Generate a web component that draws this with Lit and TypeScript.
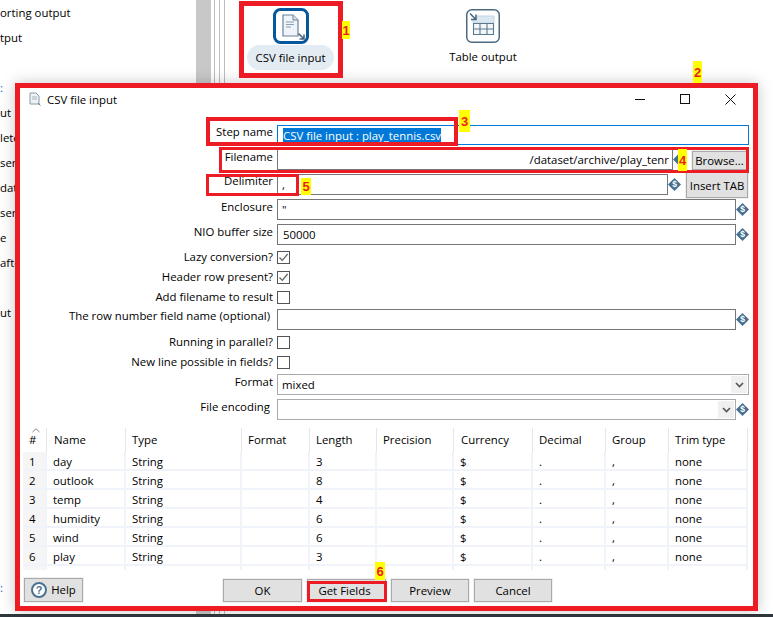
import { LitElement, html, css } from "lit";
import { customElement } from "lit/decorators.js";

const dollar = html`<svg class="var" width="13" height="13" viewBox="0 0 13 13"><path d="M6.5 0 13 6.5 6.5 13 0 6.5Z" fill="#46708f"/><circle cx="6.5" cy="6.5" r="4" fill="#46708f"/><text x="6.5" y="9.4" text-anchor="middle" font-size="8.5" font-weight="700" font-family="Liberation Sans, sans-serif" fill="#fff">$</text></svg>`;
const diamond = html`<svg class="var" width="13" height="13" viewBox="0 0 13 13"><path d="M6.5 0 13 6.5 6.5 13 0 6.5Z" fill="#46708f"/></svg>`;
const chevron = html`<span class="arrow"><svg width="9" height="6" viewBox="0 0 9 6"><path d="M1 1 4.5 4.6 8 1" fill="none" stroke="#555" stroke-width="1.6"/></svg></span>`;
const check = html`<svg width="11" height="11" viewBox="0 0 11 11"><path d="M1.5 5.5 4.3 8.4 9.6 2" fill="none" stroke="#666" stroke-width="1.3"/></svg>`;

const rows = [
  ["1", "day", "String", "", "3"],
  ["2", "outlook", "String", "", "8"],
  ["3", "temp", "String", "", "4"],
  ["4", "humidity", "String", "", "6"],
  ["5", "wind", "String", "", "6"],
  ["6", "play", "String", "", "3"],
  ["", "", "", "", ""],
];
const headers = ["#", "Name", "Type", "Format", "Length", "Precision", "Currency", "Decimal", "Group", "Trim type"];
const sidebar = ["orting output", "tput", "", "~:", "ut", "lete", "sert", "dat", "ser", "e", "afte", "", "ut"];
const boxes = [
  { x: 239, y: 1, w: 104, h: 77, t: 5 },
  { x: 206, y: 117, w: 252, h: 29, t: 4 },
  { x: 219, y: 147, w: 530, h: 26, t: 3 },
  { x: 206, y: 174, w: 93, h: 22, t: 3 },
  { x: 307, y: 581, w: 80, h: 21, t: 3 },
];
const tags = [
  { n: "1", x: 342, y: 21, w: 8, h: 18 },
  { n: "2", x: 693, y: 61, w: 9, h: 22 },
  { n: "3", x: 459, y: 110, w: 11, h: 22 },
  { n: "4", x: 678, y: 149, w: 9, h: 22 },
  { n: "5", x: 301, y: 178, w: 10, h: 17 },
  { n: "6", x: 375, y: 562, w: 10, h: 18 },
];

@customElement("app-root")
export class AppRoot extends LitElement {
  static styles = css`
    :host { display: block; width: 773px; height: 617px; position: relative; overflow: hidden; background: #fff;
      font-family: "Open Sans", "Liberation Sans", sans-serif; font-size: 11.4px; color: #000; }
    * { box-sizing: border-box; }
    .page { display: grid; grid-template-rows: 614px 3px; height: 617px; }
    .workspace { display: flex; min-height: 0; }
    .side { width: 196px; display: flex; flex-direction: column; overflow: hidden; white-space: nowrap; }
    .side div { height: 25px; flex: none; line-height: 26px; }
    .side .link { color: #0a6bc0; }
    .strip { width: 15px; background: #c8c8c8; }
    .rails { width: 15px; display: flex; gap: 4px; padding-left: 3px; }
    .rails i { width: 1px; background: #bdbdbd; }
    .canvas { flex: 1; position: relative; }
    .foot { background: #31383d; }
    .node { position: absolute; display: flex; flex-direction: column; align-items: center; }
    .node svg { display: block; }
    .n1 { left: 21px; top: 8px; width: 87px; }
    .n2 { left: 224px; top: 9px; width: 66px; }
    .n1 .cap { margin-top: 1px; height: 25px; width: 87px; padding-bottom: 1px; border-radius: 13px; background: #e3ebf3; display: flex; align-items: center; justify-content: center; }
    .n2 .cap { margin-top: 1px; height: 25px; display: flex; align-items: center; white-space: nowrap; }

    .dialog { position: absolute; left: 15px; top: 83px; width: 743px; height: 528px; border: 5px solid #ed1c24; background: #fff;
      box-shadow: 0 0 14px rgba(0,0,0,.22); display: flex; flex-direction: column; }
    .title { height: 24px; flex: none; display: flex; align-items: center; padding: 0 0 2px 9px; gap: 6px; }
    .title .wbtns { margin-left: auto; display: flex; align-items: center; gap: 35px; padding-right: 17px; }
    .form { margin-top: 13px; display: grid; grid-template-columns: 253px 1fr; column-gap: 4px; padding-right: 4px;
      grid-template-rows: 24px 25px 25px 25px 26px 20px 20px 19px 26px 20px 19px 25px 21px; }
    .lab { text-align: right; line-height: 16px; margin-top: -1px; white-space: nowrap; }
    .lab.down { margin-top: 0; }
    .lab.pad { padding-right: 3px; }
    .field { display: flex; align-items: flex-start; min-width: 0; }
    .input { height: 21px; border: 1px solid #767676; background: #fff; display: flex; align-items: center; padding-left: 5px; white-space: nowrap; overflow: hidden; }
    .input.tight { padding-left: 4px; }
    .grow { flex: 1; min-width: 0; }
    .w396 { width: 396px; flex: none; justify-content: flex-end; padding-right: 3px; }
    .w391 { width: 391px; flex: none; }
    .step { height: 20px; border-color: #0078d7; }
    .sel { background: #0078d7; color: #fff; line-height: 15px; height: 15px; }
    .var { display: block; flex: none; margin-top: 4px; }
    .combo { border-color: #a9a9b0; padding-right: 1px; padding-left: 4px; justify-content: space-between; }
    .arrow { width: 16px; height: 17px; background: #f0f0f0; display: flex; align-items: center; justify-content: center; }
    .chk { width: 13px; height: 13px; margin-top: 1px; border: 1px solid #555; display: flex; align-items: center; justify-content: center; }
    .btn { background: #e1e1e1; border: 1px solid #a9a9a9; box-shadow: 0 0 0 1px #efefef; display: flex; align-items: center; justify-content: center; height: 23px; white-space: nowrap; }
    .browse { width: 55px; height: 19px; margin: 2px 0 0 6px; }
    .itab { width: 62px; height: 26px; margin: -2px 0 0 5px; }

    .table { margin: 8px 0 0 3px; width: 725px; height: 142px; overflow: hidden; display: grid;
      grid-template-columns: 24px 79px 116px 68px 67px 77px 79px 73px 63px 79px;
      grid-template-rows: 24px repeat(7, 19px); }
    .th { display: flex; align-items: center; padding: 0 0 2px 6px; border-right: 1px solid #e6e6e6; position: relative; }
    .th.wide { padding-left: 7px; }
    .th .caret { position: absolute; left: 9px; top: 0; }
    .td { display: flex; align-items: center; padding: 1px 0 0 6px; border-right: 2px solid #f0f3f9; border-bottom: 2px solid #f0f3f9; white-space: nowrap; overflow: hidden; }
    .td.num { background: #f5f5f5; padding-left: 6px; }

    .bar { margin-top: 9px; display: flex; padding-left: 4px; }
    .help { width: 59px; height: 24px; margin-top: -1px; gap: 4px; padding-bottom: 1px; }
    .actions { display: flex; gap: 5px; margin-left: 140px; }
    .actions .btn { width: 79px; }
    .actions .get { padding-right: 4px; }
    .actions .w78 { width: 78px; }

    .box { position: absolute; border-style: solid; border-color: #ed1c24; pointer-events: none; }
    .tag { position: absolute; background: #ffff00; color: #ed1c24; font: 700 13px "Liberation Sans", sans-serif; display: flex; align-items: center; justify-content: center; }
  `;

  render() {
    return html`
      <div class="page">
        <div class="workspace">
          <div class="side">
            ${sidebar.map((s) => (s.startsWith("~") ? html`<div class="link">${s.slice(1)}</div>` : html`<div>${s}</div>`))}
            ${Array.from({ length: 10 }, () => html`<div></div>`)}
            <div class="link">:</div>
          </div>
          <div class="strip"></div>
          <div class="rails"><i></i><i></i><i></i></div>
          <div class="canvas">
            <div class="node n1">
              <svg width="36" height="36" viewBox="0 0 36 36">
                <rect x="1.5" y="1.5" width="33" height="33" rx="6" fill="#fff" stroke="#04589b" stroke-width="3"/>
                <path d="M10 7H20L25 12V28H10Z" fill="#eef4fa" stroke="#6b8296" stroke-width="1.2"/>
                <path d="M20 7V12H25" fill="#dbe6ef" stroke="#6b8296"/>
                <path d="M13 14H21M13 16.5H21M13 19H18" stroke="#8ba1b3"/>
                <path d="M25.5 25.5 31 31M31 26.5V31H26.5" fill="none" stroke="#46657c" stroke-width="1.6"/>
              </svg>
              <div class="cap">CSV file input</div>
            </div>
            <div class="node n2">
              <svg width="34" height="34" viewBox="0 0 34 34">
                <rect x=".75" y=".75" width="32.5" height="32.5" rx="5" fill="#fff" stroke="#4a6a82" stroke-width="1.5"/>
                <path d="M11 7H28V14H7V11Z" fill="#dbe8f2" stroke="#c5d5e0"/>
                <path d="M7.5 14.5H27.5V25.5H7.5ZM7.5 20H27.5M14 14.5V25.5M21 14.5V25.5" fill="#f3f7fa" stroke="#5b7a90" stroke-width="1.1"/>
                <path d="M4 4.5 10 10.5M10 5.5V10.5H5" fill="none" stroke="#46657c" stroke-width="1.5"/>
              </svg>
              <div class="cap">Table output</div>
            </div>
          </div>
        </div>
        <div class="foot"></div>
      </div>

      <div class="dialog">
        <div class="title">
          <svg width="12" height="14" viewBox="0 0 12 14">
            <path d="M1 1H7L10 4V12H1Z" fill="#eef2f5" stroke="#8a9aa6"/>
            <path d="M3 5H8M3 7H8" stroke="#a8b5bf"/>
            <path d="M9 11 11.5 13.5" stroke="#5b7a90"/>
          </svg>
          <span>CSV file input</span>
          <div class="wbtns">
            <svg width="10" height="10" viewBox="0 0 10 10"><path d="M0 5.5H10" stroke="#111"/></svg>
            <svg width="10" height="10" viewBox="0 0 10 10"><rect x=".5" y=".5" width="9" height="9" fill="none" stroke="#111"/></svg>
            <svg width="11" height="11" viewBox="0 0 11 11"><path d="M.5 .5 10.5 10.5M10.5 .5 .5 10.5" stroke="#111"/></svg>
          </div>
        </div>

        <div class="form">
          <div class="lab">Step name</div>
          <div class="field"><div class="input step grow"><span class="sel">CSV file input : play_tennis.csv</span></div></div>

          <div class="lab down">Filename</div>
          <div class="field">
            <div class="input w396">/dataset/archive/play_tenr</div>${diamond}
            <div class="btn browse">Browse...</div>
          </div>

          <div class="lab">Delimiter</div>
          <div class="field">
            <div class="input w391 tight">,</div>${dollar}
            <div class="btn itab">Insert TAB</div>
          </div>

          <div class="lab down">Enclosure</div>
          <div class="field"><div class="input grow tight">"</div>${dollar}</div>

          <div class="lab down">NIO buffer size</div>
          <div class="field"><div class="input grow">50000</div>${dollar}</div>

          <div class="lab">Lazy conversion?</div>
          <div class="field"><div class="chk">${check}</div></div>

          <div class="lab">Header row present?</div>
          <div class="field"><div class="chk">${check}</div></div>

          <div class="lab">Add filename to result</div>
          <div class="field"><div class="chk"></div></div>

          <div class="lab pad">The row number field name (optional)</div>
          <div class="field"><div class="input grow"></div>${dollar}</div>

          <div class="lab">Running in parallel?</div>
          <div class="field"><div class="chk"></div></div>

          <div class="lab">New line possible in fields?</div>
          <div class="field"><div class="chk"></div></div>

          <div class="lab down">Format</div>
          <div class="field"><div class="input combo grow"><span>mixed</span>${chevron}</div></div>

          <div class="lab pad down">File encoding</div>
          <div class="field"><div class="input combo grow"><span></span>${chevron}</div>${dollar}</div>
        </div>

        <div class="table">
          ${headers.map((h, i) => html`<div class="th ${i === 1 || i === 6 ? "wide" : ""}">
            ${i === 0 ? html`<svg class="caret" width="8" height="5" viewBox="0 0 8 5"><path d="M.5 4 4 .8 7.5 4" fill="none" stroke="#888"/></svg>` : ""}${h}</div>`)}
          ${rows.map((r) => {
            const empty = r[0] === "";
            return html`
              <div class="td num">${r[0]}</div>
              <div class="td">${r[1]}</div>
              <div class="td">${r[2]}</div>
              <div class="td">${r[3]}</div>
              <div class="td">${r[4]}</div>
              <div class="td"></div>
              <div class="td">${empty ? "" : "$"}</div>
              <div class="td">${empty ? "" : "."}</div>
              <div class="td">${empty ? "" : ","}</div>
              <div class="td">${empty ? "" : "none"}</div>`;
          })}
        </div>

        <div class="bar">
          <div class="btn help">
            <svg width="16" height="16" viewBox="0 0 16 16"><circle cx="8" cy="8" r="7" fill="#fff" stroke="#4a7392" stroke-width="2"/><text x="8" y="12" text-anchor="middle" font-size="11" font-weight="700" font-family="Liberation Sans, sans-serif" fill="#4a7392">?</text></svg>
            Help
          </div>
          <div class="actions">
            <div class="btn">OK</div>
            <div class="btn get">Get Fields</div>
            <div class="btn w78">Preview</div>
            <div class="btn w78">Cancel</div>
          </div>
        </div>
      </div>

      ${boxes.map((b) => html`<div class="box" style="left:${b.x}px;top:${b.y}px;width:${b.w}px;height:${b.h}px;border-width:${b.t}px"></div>`)}
      ${tags.map((t) => html`<div class="tag" style="left:${t.x}px;top:${t.y}px;width:${t.w}px;height:${t.h}px">${t.n}</div>`)}
    `;
  }
}
